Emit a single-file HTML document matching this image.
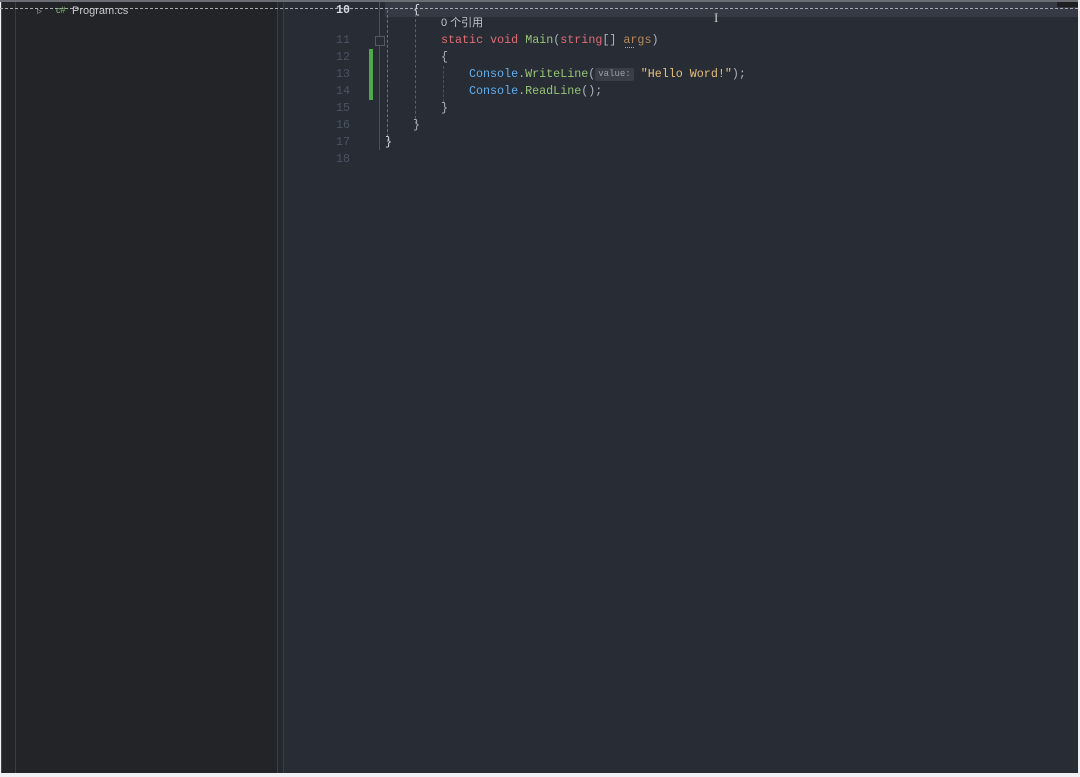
<!DOCTYPE html>
<html><head><meta charset="utf-8"><style>
html,body{margin:0;padding:0;}
body{width:1080px;height:777px;background:#f0f0f5;position:relative;overflow:hidden;font-family:"Liberation Mono","DejaVu Sans Mono",monospace;}
.a{position:absolute;}
.code{position:absolute;font-size:11.7px;line-height:17px;white-space:pre;color:#abb2bf;}
.ln{position:absolute;left:300px;width:50px;text-align:right;font-size:11.7px;line-height:17px;color:#4b5263;font-family:"Liberation Mono",monospace;}
.k{color:#e06c75}.m{color:#98c379}.c{color:#61afef}.s{color:#e5c07b}.p{color:#d19a66;opacity:.85}
</style></head><body>
<div class="a" style="left:0;top:0;width:1078px;height:2px;background:#6a6d73"></div>
<div class="a" style="left:1px;top:2px;width:276px;height:771px;background:#222428"></div>
<div class="a" style="left:1px;top:2px;width:1px;height:771px;background:#444"></div>
<div class="a" style="left:15px;top:2px;width:1px;height:771px;background:#3a3c40"></div>
<div class="a" style="left:277px;top:2px;width:1px;height:771px;background:#3c3e42"></div>
<div class="a" style="left:278px;top:2px;width:5px;height:771px;background:#25282d"></div>
<div class="a" style="left:283px;top:2px;width:1px;height:771px;background:#3a3d44"></div>
<div class="a" style="left:284px;top:2px;width:794px;height:771px;background:#282c34"></div>
<div class="a" style="left:385px;top:2px;width:693px;height:15px;background:#353a45"></div>
<div class="a" style="left:1057px;top:2px;width:21px;height:5px;background:#1e1f22"></div>
<div class="a" style="left:0;top:8px;width:1078px;height:0;border-top:1px dashed #a8abb0"></div>
<div class="a" style="left:37px;top:6px;font-family:'Liberation Sans',sans-serif;font-size:10px;color:#999">▹</div>
<div class="a" style="left:56px;top:5px;font-family:'Liberation Sans',sans-serif;font-size:9px;color:#7fbf6a">c#</div>
<div class="a" style="left:72px;top:5px;font-family:'Liberation Sans',sans-serif;font-size:11px;color:#c8c8c8">Program.cs</div>
<div class="ln" style="top:2px;color:#d7dae0;font-weight:bold">10</div>
<div class="ln" style="top:32px">11</div>
<div class="ln" style="top:49px">12</div>
<div class="ln" style="top:66px">13</div>
<div class="ln" style="top:83px">14</div>
<div class="ln" style="top:100px">15</div>
<div class="ln" style="top:117px">16</div>
<div class="ln" style="top:134px">17</div>
<div class="ln" style="top:151px">18</div>
<div class="a" style="left:369px;top:49px;width:4px;height:51px;background:#4fa84a"></div>
<div class="a" style="left:379px;top:2px;width:1px;height:148px;background:#4b5058"></div>
<div class="a" style="left:375px;top:36px;width:8px;height:8px;border:1px solid #555a62;background:#282c34"></div>
<div class="a" style="left:387px;top:10px;height:132px;border-left:1px dashed #6a6f78"></div>
<div class="a" style="left:415px;top:14px;height:110px;border-left:1px dashed #5a5f68"></div>
<div class="a" style="left:443px;top:66px;height:36px;border-left:1px dashed #4a4f58"></div>
<div class="code" style="left:413px;top:2px;color:#d7dae0">{</div>
<div class="a" style="left:441px;top:15px;font-family:'Liberation Sans','Noto Sans CJK SC',sans-serif;font-size:11px;color:#c0c4cc;line-height:17px">0 个引用</div>
<div class="code" style="left:441px;top:32px"><span class="k">static</span> <span class="k">void</span> <span class="m">Main</span>(<span class="k">string</span>[] <span class="p">args</span>)</div>
<div class="a" style="left:625px;top:47px;width:9px;border-top:1px dotted #aaa"></div>
<div class="code" style="left:441px;top:49px">{</div>
<div class="code" style="left:469px;top:66px"><span class="c">Console</span>.<span class="m">WriteLine</span>(<span style="display:inline-block;background:#3a3e46;color:#9aa0a8;font-size:9px;line-height:13px;padding:0 3px;border-radius:2px;vertical-align:1px">value:</span> <span class="s">"Hello Word!"</span>);</div>
<div class="code" style="left:469px;top:83px"><span class="c">Console</span>.<span class="m">ReadLine</span>();</div>
<div class="code" style="left:441px;top:100px">}</div>
<div class="code" style="left:413px;top:117px">}</div>
<div class="code" style="left:385px;top:134px;color:#d7dae0">}</div>
<div class="a" style="left:714px;top:10px;font-family:'Liberation Serif',serif;font-size:13px;color:#ccc">I</div>
</body></html>
